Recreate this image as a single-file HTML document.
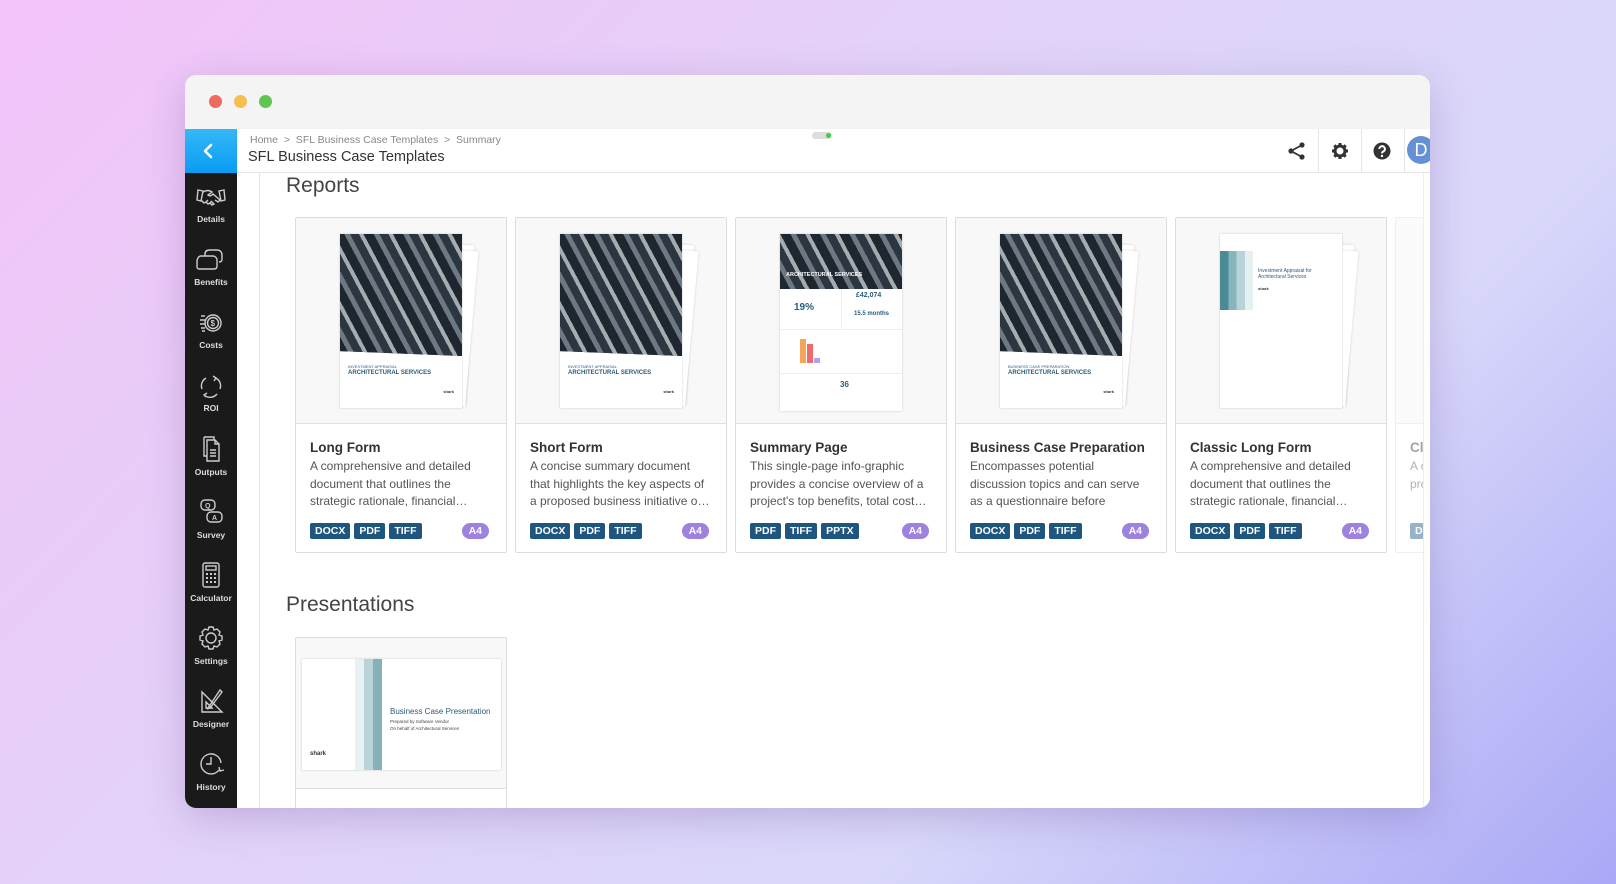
<!DOCTYPE html>
<html><head><meta charset="utf-8"><style>
*{box-sizing:border-box;margin:0;padding:0}
body{width:1616px;height:884px;overflow:hidden;font-family:"Liberation Sans",sans-serif;background:linear-gradient(135deg,#f3c3f9 0%,#e3d3f8 40%,#d9d8fa 70%,#aaa8f6 100%);position:relative}
.win{position:absolute;left:185px;top:75px;width:1245px;height:733px;border-radius:11px;overflow:hidden;background:#f4f4f4;box-shadow:0 10px 40px rgba(90,60,140,.25)}
.tl{position:absolute;top:20px;width:13px;height:13px;border-radius:50%}
.hdr{position:absolute;left:52px;top:54px;right:0;height:44px;background:#fff;border-bottom:1px solid #e6e6e6;box-shadow:0 1px 3px rgba(0,0,0,.06)}
.back{position:absolute;left:0;top:54px;width:52px;height:44px;background:linear-gradient(180deg,#34b8f8,#0a9cf3)}
.side{position:absolute;left:0;top:98px;width:52px;bottom:0;background:#1a1a1a}
.si{position:absolute;left:0;width:52px;text-align:center;color:#ddd;font-size:8.5px;font-weight:bold}
.si svg{display:block;margin:0 auto 5px}
.main{position:absolute;left:52px;top:98px;right:0;bottom:0;background:#fff;overflow:hidden}
.panel{position:absolute;left:22px;top:0;width:1px;bottom:0;background:#e4e4e4}
h2{position:absolute;font-weight:normal;font-size:21px;color:#444}
.card{position:absolute;top:44px;width:212px;height:336px;border:1px solid #ddd;background:#fff;border-radius:2px}
.img{height:206px;background:#f8f8f8;border-bottom:1px solid #e0e0e0;position:relative}
.pg{position:absolute;left:44px;top:16px;width:122px;height:174px;background:#fff;box-shadow:0 0 2px rgba(0,0,0,.2)}
.sh{position:absolute;background:#fff;box-shadow:0 0 2px rgba(0,0,0,.18)}
.cov{position:absolute;left:0;top:0;width:122px;height:122px;background:repeating-linear-gradient(62deg,#1e2630 0 9px,#6d7880 9px 14px,#2c3640 14px 22px,#a4acb0 22px 26px),#222;clip-path:polygon(0 0,100% 0,100% 100%,0 96%)}
.card h3{position:absolute;left:14px;top:222px;font-size:13.5px;color:#333}
.card p{position:absolute;left:14px;top:240px;width:182px;font-size:12px;line-height:17.5px;color:#555;height:53px;overflow:hidden}
.tags{position:absolute;left:14px;top:305px;height:16px;display:flex;gap:4px}
.tag{background:#1f567f;color:#fff;font-size:10.5px;font-weight:bold;padding:2px 5px;border-radius:2px;line-height:12px}
.a4{position:absolute;right:17px;top:305px;background:#9d82e0;color:#fff;font-size:10.5px;font-weight:bold;padding:2px 7px;border-radius:8px;line-height:12px}
.ct{position:absolute;font-size:6px;color:#2a5d7d}
</style></head><body>
<div class="win">
<div class="tl" style="left:24px;background:#ec6a5e"></div>
<div class="tl" style="left:49px;background:#f4bf4f"></div>
<div class="tl" style="left:74px;background:#61c554"></div>
<div class="back"><svg width="52" height="44"><path d="M26 16l-6 6 6 6" stroke="#fff" stroke-width="2.6" fill="none" stroke-linecap="round" stroke-linejoin="round"/></svg></div>
<div class="hdr">
<div style="position:absolute;left:13px;top:5px;font-size:10.5px;color:#888">Home &nbsp;&gt;&nbsp; SFL Business Case Templates &nbsp;&gt;&nbsp; Summary</div>
<div style="position:absolute;left:11px;top:20px;font-size:14.5px;color:#333">SFL Business Case Templates</div>
<div style="position:absolute;left:575px;top:3px;width:20px;height:7px;border-radius:4px;background:#ddd"><div style="position:absolute;right:1px;top:1px;width:5px;height:5px;border-radius:50%;background:#4c4"></div></div>
<div style="position:absolute;left:1081px;top:0;width:1px;height:44px;background:#e6e6e6"></div>
<div style="position:absolute;left:1124px;top:0;width:1px;height:44px;background:#e6e6e6"></div>
<div style="position:absolute;left:1167px;top:0;width:1px;height:44px;background:#e6e6e6"></div>
<svg style="position:absolute;left:1050px;top:12px" width="20" height="20"><circle cx="15" cy="4" r="2.6" fill="#333"/><circle cx="4" cy="10" r="2.6" fill="#333"/><circle cx="15" cy="16" r="2.6" fill="#333"/><path d="M15 4L4 10l11 6" stroke="#333" stroke-width="1.8" fill="none"/></svg>
<svg style="position:absolute;left:1093px;top:12px" width="20" height="20"><circle cx="10" cy="10" r="5" stroke="#333" stroke-width="3" fill="none"/><g stroke="#333" stroke-width="3"><path d="M10 2v3M10 15v3M2 10h3M15 10h3M4.3 4.3l2 2M13.7 13.7l2 2M4.3 15.7l2-2M13.7 6.3l2-2"/></g></svg>
<svg style="position:absolute;left:1135px;top:12px" width="20" height="20"><circle cx="10" cy="10" r="8.5" fill="#333"/><path d="M7.3 8a2.8 2.8 0 1 1 3.8 2.6c-.9.4-1.1.9-1.1 1.8" stroke="#fff" stroke-width="2" fill="none"/><circle cx="10" cy="15" r="1.2" fill="#fff"/></svg>
<div style="position:absolute;left:1170px;top:7px;width:28px;height:28px;border-radius:50%;background:#6690d4;color:#fff;font-size:18px;line-height:28px;text-align:center">D</div>
</div>
<div class="side">
<div class="si" style="top:12px"><svg width="30" height="24" viewBox="0 0 30 24" fill="none" stroke="#ccc" stroke-width="1.4"><path d="M2 5l5 1-2 10-4-1zM28 5l-5 1 2 10 4-1zM7 7c4-2 6-2 9 0l-4 3c2 2 4 0 5-1l7 6-2 2-3-2M5 15l3 3 2-1 2 2 2-1 2 2 2-1-3-3M10 17l2-2M13 19l2-2"/></svg>Details</div>
<div class="si" style="top:75px"><svg width="30" height="24" viewBox="0 0 30 24" fill="none" stroke="#ccc" stroke-width="1.4"><path d="M9 8V6c0-3 2-4 5-4h7c3 0 5 2 5 5v4c0 2-1 3-3 3M5 8h12c2 0 4 2 4 4v6c0 2-1 3-3 3H3c-1 0-2-1-2-2v-5c0-4 2-6 4-6z"/></svg>Benefits</div>
<div class="si" style="top:138px"><svg width="30" height="24" viewBox="0 0 30 24" fill="none" stroke="#ccc" stroke-width="1.4"><circle cx="17" cy="12" r="8"/><circle cx="17" cy="12" r="5.5"/><path d="M9 5H5M9 9H4M9 13H4M9 17H5M9 20H6"/><text x="14.5" y="15" font-size="8" fill="#ccc" stroke="none">$</text></svg>Costs</div>
<div class="si" style="top:201px"><svg width="30" height="24" viewBox="0 0 30 24" fill="none" stroke="#ccc" stroke-width="1.4"><path d="M10 4a9 9 0 0 0-4 11M20 4a9 9 0 0 1 4 11M8 21a9 9 0 0 0 13-1M17 2l3 2-2 3M10 23l-2-2 3-2"/></svg>ROI</div>
<div class="si" style="top:263px"><svg width="30" height="26" viewBox="0 0 30 26" fill="none" stroke="#ccc" stroke-width="1.4"><path d="M8 1h10v3M8 1v19h3M11 4h8l4 4v17H11z M19 4v4h4M14 14h6M14 17h6M14 20h6"/></svg>Outputs</div>
<div class="si" style="top:326px"><svg width="30" height="26" viewBox="0 0 30 26" fill="none" stroke="#ccc" stroke-width="1.4"><rect x="5" y="1" width="14" height="10" rx="4"/><rect x="11" y="13" width="15" height="10" rx="4"/><text x="9" y="9" font-size="7" fill="#ccc" stroke="none" font-weight="bold">Q</text><text x="16" y="21" font-size="7" fill="#ccc" stroke="none" font-weight="bold">A</text></svg>Survey</div>
<div class="si" style="top:389px"><svg width="30" height="26" viewBox="0 0 30 26" fill="none" stroke="#ccc" stroke-width="1.4"><rect x="7" y="1" width="16" height="24" rx="2"/><rect x="10" y="4" width="10" height="4"/><path d="M10 12h2M14 12h2M18 12h2M10 16h2M14 16h2M18 16h2M10 20h2M14 20h2M18 20h2" stroke-width="2"/></svg>Calculator</div>
<div class="si" style="top:452px"><svg width="30" height="26" viewBox="0 0 30 26" fill="none" stroke="#ccc" stroke-width="1.4"><circle cx="15" cy="13" r="5"/><path d="M13 2h4l1 3 3-1 3 3-1 3 3 1v4l-3 1 1 3-3 3-3-1-1 3h-4l-1-3-3 1-3-3 1-3-3-1v-4l3-1-1-3 3-3 3 1z"/></svg>Settings</div>
<div class="si" style="top:515px"><svg width="30" height="26" viewBox="0 0 30 26" fill="none" stroke="#ccc" stroke-width="1.4"><path d="M6 4v20h20zM10 14v6h6zM12 20l12-18 2 2-12 16-3 1z"/></svg>Designer</div>
<div class="si" style="top:578px"><svg width="30" height="26" viewBox="0 0 30 26" fill="none" stroke="#ccc" stroke-width="1.4"><path d="M23 19A10 10 0 1 1 25 12M15 6v7H10M23 16l1 4 4-1"/></svg>History</div>
</div>
<div class="main">
<div class="panel"></div>
<h2 style="left:49px;top:1px">Reports</h2>

<div class="card" style="left:58px"><div class="img"><div class="sh" style="left:56px;top:24px;width:118px;height:160px;transform:rotate(3deg)"></div><div class="sh" style="left:58px;top:28px;width:118px;height:156px;transform:rotate(5deg)"></div><div class="pg"><div class="cov"></div><div class="ct" style="left:8px;top:130px;font-size:4px">INVESTMENT APPRAISAL</div><div class="ct" style="left:8px;top:136px;font-weight:bold">ARCHITECTURAL SERVICES</div><div class="ct" style="right:8px;top:155px;color:#333;font-weight:bold;font-size:4px">shark</div></div></div>
<h3>Long Form</h3><p>A comprehensive and detailed document that outlines the strategic rationale, financial…</p>
<div class="tags"><span class="tag">DOCX</span><span class="tag">PDF</span><span class="tag">TIFF</span></div><span class="a4">A4</span></div>

<div class="card" style="left:278px"><div class="img"><div class="sh" style="left:56px;top:24px;width:118px;height:160px;transform:rotate(3deg)"></div><div class="sh" style="left:58px;top:28px;width:118px;height:156px;transform:rotate(5deg)"></div><div class="pg"><div class="cov"></div><div class="ct" style="left:8px;top:130px;font-size:4px">INVESTMENT APPRAISAL</div><div class="ct" style="left:8px;top:136px;font-weight:bold">ARCHITECTURAL SERVICES</div><div class="ct" style="right:8px;top:155px;color:#333;font-weight:bold;font-size:4px">shark</div></div></div>
<h3>Short Form</h3><p>A concise summary document that highlights the key aspects of a proposed business initiative o…</p>
<div class="tags"><span class="tag">DOCX</span><span class="tag">PDF</span><span class="tag">TIFF</span></div><span class="a4">A4</span></div>

<div class="card" style="left:498px"><div class="img"><div class="pg" style="height:177px"><div class="cov" style="height:55px;clip-path:none"></div><div style="position:absolute;left:6px;top:38px;color:#fff;font-size:5.5px;font-weight:bold">ARCHITECTURAL SERVICES</div><div style="position:absolute;left:0;top:55px;width:122px;height:122px;background:linear-gradient(#eee,#eee) 61px 0/1px 40px no-repeat,linear-gradient(#eee,#eee) 0 40px/122px 1px no-repeat,linear-gradient(#eee,#eee) 0 84px/122px 1px no-repeat"></div><div class="ct" style="left:14px;top:68px;font-size:10px;font-weight:bold">19%</div><div class="ct" style="left:76px;top:58px;font-size:7px;font-weight:bold">£42,074</div><div class="ct" style="left:74px;top:77px;font-size:6px;font-weight:bold">15.5 months</div><div style="position:absolute;left:20px;top:105px;width:6px;height:24px;background:#f4a55a"></div><div style="position:absolute;left:27px;top:110px;width:6px;height:19px;background:#ef6a6a"></div><div style="position:absolute;left:34px;top:124px;width:6px;height:5px;background:#a9a4f4"></div><div class="ct" style="left:60px;top:146px;font-size:8px;font-weight:bold">36</div></div></div>
<h3>Summary Page</h3><p>This single-page info-graphic provides a concise overview of a project's top benefits, total cost…</p>
<div class="tags"><span class="tag">PDF</span><span class="tag">TIFF</span><span class="tag">PPTX</span></div><span class="a4">A4</span></div>

<div class="card" style="left:718px"><div class="img"><div class="sh" style="left:56px;top:24px;width:118px;height:160px;transform:rotate(3deg)"></div><div class="sh" style="left:58px;top:28px;width:118px;height:156px;transform:rotate(5deg)"></div><div class="pg"><div class="cov"></div><div class="ct" style="left:8px;top:130px;font-size:4px">BUSINESS CASE PREPARATION</div><div class="ct" style="left:8px;top:136px;font-weight:bold">ARCHITECTURAL SERVICES</div><div class="ct" style="right:8px;top:155px;color:#333;font-weight:bold;font-size:4px">shark</div></div></div>
<h3>Business Case Preparation</h3><p>Encompasses potential discussion topics and can serve as a questionnaire before conductin…</p>
<div class="tags"><span class="tag">DOCX</span><span class="tag">PDF</span><span class="tag">TIFF</span></div><span class="a4">A4</span></div>

<div class="card" style="left:938px"><div class="img"><div class="sh" style="left:56px;top:24px;width:118px;height:160px;transform:rotate(3deg)"></div><div class="sh" style="left:58px;top:28px;width:118px;height:156px;transform:rotate(5deg)"></div><div class="pg"><div style="position:absolute;left:0;top:17px;width:33px;height:59px;background:linear-gradient(90deg,#4a8b96 0 25%,#86b5bb 25% 50%,#b8d4d8 50% 75%,#e5f0f2 75%)"></div><div class="ct" style="left:38px;top:34px;font-size:5px;width:60px">Investment Appraisal for Architectural Services</div><div class="ct" style="left:38px;top:52px;color:#333;font-weight:bold;font-size:4px">shark</div></div></div>
<h3>Classic Long Form</h3><p>A comprehensive and detailed document that outlines the strategic rationale, financial…</p>
<div class="tags"><span class="tag">DOCX</span><span class="tag">PDF</span><span class="tag">TIFF</span></div><span class="a4">A4</span></div>

<div class="card" style="left:1158px;opacity:.45"><div class="img"></div><h3>Classic</h3><p>A comprehensive that outlines a proposed</p><div class="tags"><span class="tag">DOCX</span></div></div>
<div style="position:absolute;left:1186px;top:0;width:30px;bottom:0;background:#fff;border-left:1px solid #eee"></div>

<h2 style="left:49px;top:420px">Presentations</h2>
<div class="card" style="left:58px;top:464px;height:200px"><div class="img" style="height:151px"><div style="position:absolute;left:6px;top:21px;width:199px;height:111px;background:#fff;box-shadow:0 0 2px rgba(0,0,0,.2)"><div style="position:absolute;left:53px;top:0;width:27px;height:111px;background:linear-gradient(90deg,#e8f1f3 0 33%,#b8d4d8 33% 66%,#86b1b8 66%)"></div><div class="ct" style="left:88px;top:48px;font-size:8px">Business Case Presentation</div><div class="ct" style="left:88px;top:60px;font-size:4.5px;color:#444">Prepared by Software Vendor</div><div class="ct" style="left:88px;top:67px;font-size:4.5px;color:#444">On behalf of Architectural Services</div><div class="ct" style="left:8px;top:92px;color:#333;font-weight:bold;font-size:6px">shark</div></div></div></div>
</div>
</div>
</body></html>
